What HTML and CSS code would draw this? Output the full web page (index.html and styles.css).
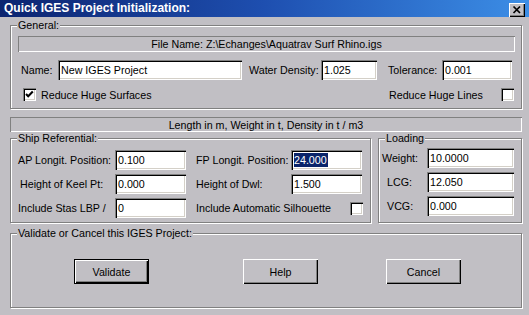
FILE: index.html
```html
<!DOCTYPE html>
<html>
<head>
<meta charset="utf-8">
<link rel="stylesheet" href="styles.css">
</head>
<body>
<div class="window">
  <div class="titlebar">
    <span class="title">Quick IGES Project Initialization:</span>
    <span class="close"><svg width="16" height="14" viewBox="0 0 16 14"><path d="M4.5 3.5 L11 10 M11 3.5 L4.5 10" stroke="#000" stroke-width="1.7" fill="none"/></svg></span>
  </div>
  <div class="body">
    <div class="group general">
      <span class="legend">General:</span>
      <div class="static-bar">File Name: Z:\Echanges\Aquatrav Surf Rhino.igs</div>
      <div class="row name-row">
        <span class="lbl l-name">Name:</span>
        <div class="field f-name">New IGES Project</div>
        <span class="lbl l-water">Water Density:</span>
        <div class="field f-water">1.025</div>
        <span class="lbl l-tol">Tolerance:</span>
        <div class="field f-tol">0.001</div>
      </div>
      <div class="row check-row">
        <span class="check c-surf"><svg width="9" height="9" viewBox="0 0 9 9"><path d="M1 4 L3.2 6.2 L7.8 1.6" stroke="#000" stroke-width="2.1" fill="none"/></svg></span>
        <span class="lbl l-surf">Reduce Huge Surfaces</span>
        <span class="lbl l-lines">Reduce Huge Lines</span>
        <span class="check"></span>
      </div>
    </div>

    <div class="static-bar units">Length in m, Weight in t, Density in t / m3</div>

    <div class="pair">
      <div class="group ship">
        <span class="legend">Ship Referential:</span>
        <div class="ship-grid">
          <span class="lbl">AP Longit. Position:</span>
          <div class="field">0.100</div>
          <span class="lbl col3">FP Longit. Position:</span>
          <div class="field"><span class="sel">24.000</span></div>

          <span class="lbl indent">Height of Keel Pt:</span>
          <div class="field">0.000</div>
          <span class="lbl col3">Height of Dwl:</span>
          <div class="field">1.500</div>

          <span class="lbl">Include Stas LBP /</span>
          <div class="field">0</div>
          <span class="lbl col3">Include Automatic Silhouette</span>
          <div class="check-cell"><span class="check"></span></div>
        </div>
      </div>
      <div class="group loading">
        <span class="legend">Loading</span>
        <div class="load-grid">
          <span class="lbl">Weight:</span>
          <div class="field">10.0000</div>
          <span class="lbl indent5">LCG:</span>
          <div class="field">12.050</div>
          <span class="lbl indent5">VCG:</span>
          <div class="field">0.000</div>
        </div>
      </div>
    </div>

    <div class="group validate">
      <span class="legend">Validate or Cancel this IGES Project:</span>
      <div class="buttons">
        <div class="btn default b-validate">Validate</div>
        <div class="btn b-help">Help</div>
        <div class="btn b-cancel">Cancel</div>
      </div>
    </div>
  </div>
</div>
</body>
</html>
```

FILE: styles.css
```css
* { box-sizing: border-box; }

body {
  margin: 0;
  background: #c1bfc4;
  font-family: "Liberation Sans", Arial, sans-serif;
  font-size: 10.7px;
  color: #000;
}

.window {
  width: 529px;
  height: 315px;
  overflow: hidden;
  background: #c1bfc4;
}

.titlebar {
  height: 17px;
  background: linear-gradient(to right, #0c2470 0%, #1e4fb0 50%, #3c8ee6 100%);
  display: flex;
  align-items: center;
  justify-content: space-between;
  padding: 0 4px 0 4px;
}

.title {
  color: #fff;
  font-weight: bold;
  font-size: 12px;
  line-height: 17px;
}

.close {
  width: 16px;
  height: 14px;
  margin-top: 2px;
  background: #c1bfc4;
  box-shadow: inset 1px 1px 0 #fff, inset -1px -1px 0 #000, inset -2px -2px 0 #808080;
  display: flex;
}

.body {
  padding: 8px 7px 0 10px;
  display: flex;
  flex-direction: column;
}

.group {
  position: relative;
  border: 1px solid #808080;
  box-shadow: inset 1px 1px 0 #fff, 1px 1px 0 #fff;
}

.legend {
  position: absolute;
  top: -7px;
  left: 6px;
  padding: 0 1px;
  background: #c1bfc4;
  line-height: 13px;
  white-space: nowrap;
}

.static-bar {
  height: 16px;
  box-shadow: inset 1px 1px 0 #808080, inset -1px -1px 0 #fff;
  display: flex;
  align-items: center;
  justify-content: center;
  white-space: nowrap;
}

.general {
  height: 84px;
  padding: 10px 6px 0 7px;
}

.row {
  display: flex;
  align-items: center;
}

.name-row {
  margin-top: 8px;
  height: 20px;
}

.lbl { white-space: nowrap; }

.field {
  height: 20px;
  background: #fff;
  box-shadow: inset 1px 1px 0 #808080, inset 2px 2px 0 #000, inset -1px -1px 0 #fff, inset -2px -2px 0 #d4d0c8;
  padding-left: 3px;
  display: flex;
  align-items: center;
  white-space: nowrap;
  overflow: hidden;
}

.l-name { margin-left: 3px; width: 37px; }
.f-name { width: 184px; }
.l-water { margin-left: 7px; width: 72px; }
.f-water { width: 56px; }
.l-tol { margin-left: 11px; width: 54px; }
.f-tol { width: 70px; }

.check-row {
  margin-top: 8px;
  height: 13px;
}

.check {
  width: 13px;
  height: 13px;
  background: #fff;
  box-shadow: inset 1px 1px 0 #808080, inset 2px 2px 0 #000, inset -1px -1px 0 #fff, inset -2px -2px 0 #d4d0c8;
  display: flex;
  align-items: center;
  justify-content: center;
  flex: none;
}

.c-surf { margin-left: 5px; }
.l-surf { margin-left: 5px; }
.l-lines { margin-left: auto; width: 112px; }
.check-row .check:last-child { margin-right: 1px; }

.units {
  margin-top: 8px;
  height: 15px;
  box-shadow: inset 1px 1px 0 #808080, inset -1px -1px 0 #fff;
}

.pair {
  margin-top: 6px;
  display: flex;
  gap: 7px;
  height: 85px;
}

.ship {
  width: 361px;
  padding: 11px 0 0 7px;
}

.ship-grid {
  display: grid;
  grid-template-columns: 97px 71px 105px 71px;
  grid-auto-rows: 20px;
  row-gap: 4px;
  align-items: center;
}

.col3 { padding-left: 10px; }
.indent { padding-left: 2px; }

.check-cell {
  display: flex;
  padding-left: 59px;
}

.sel {
  background: #0a246a;
  color: #fff;
  line-height: 14px;
  padding-right: 1px;
}

.loading {
  width: 144px;
  padding: 9px 0 0 3px;
}

.load-grid {
  display: grid;
  grid-template-columns: 45px 87px;
  grid-auto-rows: 20px;
  row-gap: 4px;
  align-items: center;
}

.indent5 { padding-left: 5px; }

.validate {
  margin-top: 10px;
  height: 75px;
  padding-top: 25px;
}

.buttons {
  display: flex;
}

.btn {
  width: 75px;
  height: 25px;
  display: flex;
  align-items: center;
  justify-content: center;
  background: #c1bfc4;
  box-shadow: inset 1px 1px 0 #fff, inset -1px -1px 0 #000, inset -2px -2px 0 #808080;
}

.btn.default {
  border: 1px solid #000;
  box-shadow: inset 1px 1px 0 #fff, inset -1px -1px 0 #000, inset -2px -2px 0 #808080;
}

.b-validate { margin-left: 63px; }
.b-help { margin-left: 94px; }
.b-cancel { margin-left: 68px; }
```
